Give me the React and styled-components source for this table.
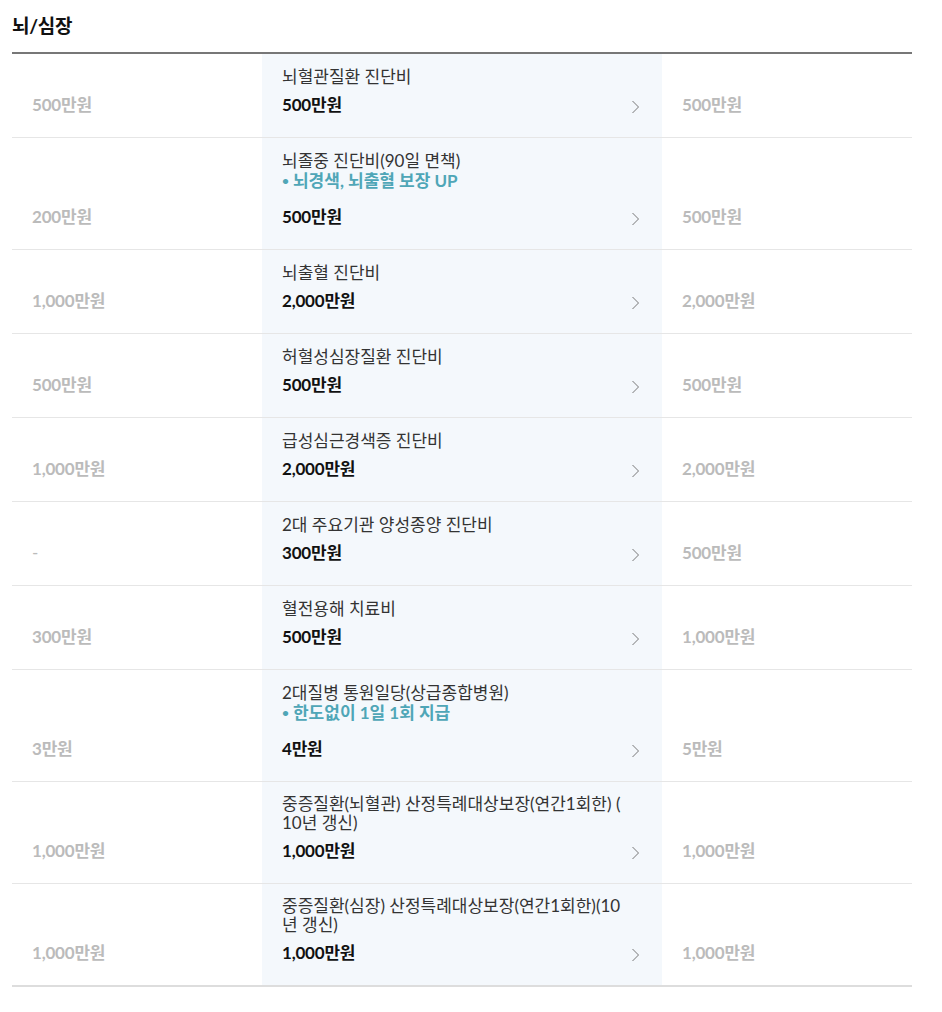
import React from 'react';
import styled, { createGlobalStyle } from 'styled-components';

const GlobalStyle = createGlobalStyle`
  body {
    margin: 0;
    background: #fff;
    font-family: Lato, "Noto Sans CJK KR", "Noto Sans", sans-serif;
    -webkit-font-smoothing: antialiased;
  }
`;

const Section = styled.section`
  width: 900px;
  padding: 0 12px;
`;

const Heading = styled.h2`
  margin: 0;
  padding: 14px 0 15px;
  font-size: 19px;
  line-height: 23px;
  font-weight: 700;
  color: #111;
  letter-spacing: -0.3px;
  border-bottom: 2px solid #777;
`;

const Row = styled.div`
  display: grid;
  grid-template-columns: 250px 400px 250px;
  border-bottom: ${({ $last }) => ($last ? '2px solid #ddd' : '1px solid #e6e6e6')};
`;

const SideCell = styled.div`
  display: flex;
  align-items: flex-end;
  padding: 0 20px 22px;
  font-size: 17px;
  line-height: 20px;
  font-weight: ${({ $empty }) => ($empty ? 400 : 700)};
  color: #bbb;
  letter-spacing: -0.2px;
`;

const MainCell = styled.div`
  background: #f4f8fc;
  padding: ${({ $tight }) => ($tight ? '12px' : '13px')} 22px 22px 20px;
  display: flex;
  flex-direction: column;
`;

const Title = styled.div`
  font-size: 17px;
  line-height: 19px;
  color: #333;
  white-space: pre-line;
`;

const Note = styled.div`
  font-size: 17px;
  line-height: 21px;
  margin-bottom: 7px;
  font-weight: 700;
  color: #4fa6b7;

  .dot {
    font-size: 12px;
    vertical-align: 2px;
    margin-right: 4px;
  }
`;

const AmountLine = styled.div`
  margin-top: 9px;
  display: flex;
  align-items: center;
  justify-content: space-between;
  font-size: 17px;
  line-height: 20px;
  font-weight: 700;
  color: #111;
  letter-spacing: -0.2px;
`;

const Chevron = () => (
  <svg width="9" height="14" viewBox="0 0 9 14" style={{ marginTop: 4 }}>
    <polyline points="1.5,1 7.5,7 1.5,13" fill="none" stroke="#777" strokeWidth="1" />
  </svg>
);

const rows = [
  { before: '500만원', title: '뇌혈관질환 진단비', amount: '500만원', after: '500만원' },
  { before: '200만원', title: '뇌졸중 진단비(90일 면책)', note: '뇌경색, 뇌출혈 보장 UP', amount: '500만원', after: '500만원' },
  { before: '1,000만원', title: '뇌출혈 진단비', amount: '2,000만원', after: '2,000만원' },
  { before: '500만원', title: '허혈성심장질환 진단비', amount: '500만원', after: '500만원' },
  { before: '1,000만원', title: '급성심근경색증 진단비', amount: '2,000만원', after: '2,000만원' },
  { before: '-', title: '2대 주요기관 양성종양 진단비', amount: '300만원', after: '500만원' },
  { before: '300만원', title: '혈전용해 치료비', amount: '500만원', after: '1,000만원' },
  { before: '3만원', title: '2대질병 통원일당(상급종합병원)', note: '한도없이 1일 1회 지급', amount: '4만원', after: '5만원' },
  { before: '1,000만원', title: '중증질환(뇌혈관) 산정특례대상보장(연간1회한) (\n10년 갱신)', amount: '1,000만원', after: '1,000만원' },
  { before: '1,000만원', title: '중증질환(심장) 산정특례대상보장(연간1회한)(10\n년 갱신)', amount: '1,000만원', after: '1,000만원' },
];

export default function App() {
  return (
    <>
      <GlobalStyle />
      <Section>
        <Heading>뇌/심장</Heading>
        {rows.map((r, i) => (
          <Row key={i} $last={i === rows.length - 1}>
            <SideCell $empty={r.before === '-'}>{r.before}</SideCell>
            <MainCell $tight={r.title.includes('\n')}>
              <Title>{r.title}</Title>
              {r.note && (
                <Note>
                  <span className="dot">•</span>
                  {r.note}
                </Note>
              )}
              <AmountLine>
                <span>{r.amount}</span>
                <Chevron />
              </AmountLine>
            </MainCell>
            <SideCell>{r.after}</SideCell>
          </Row>
        ))}
      </Section>
    </>
  );
}
